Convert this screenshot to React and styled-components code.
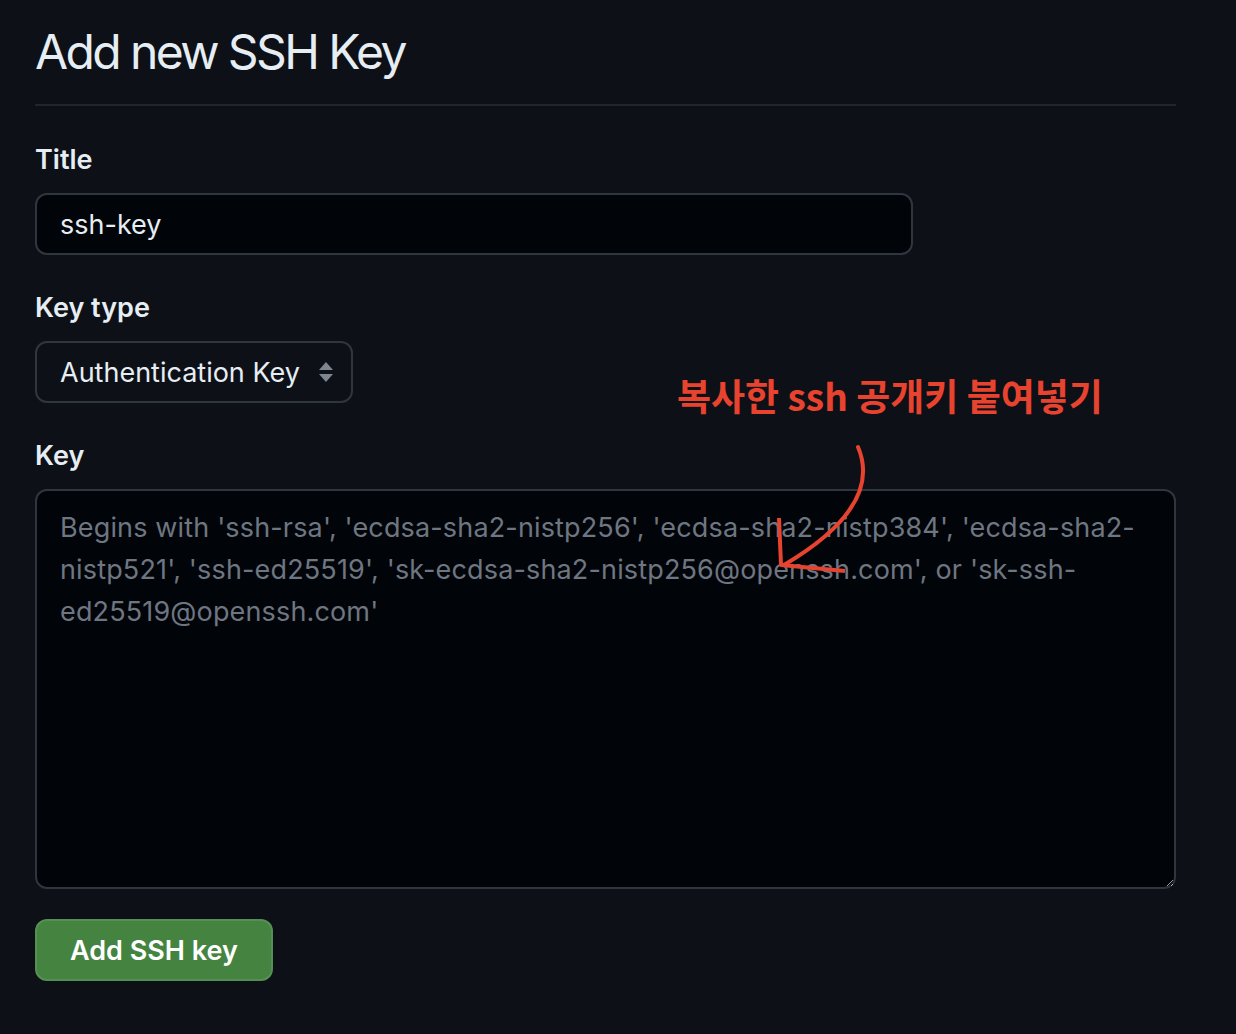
import styled, { createGlobalStyle } from 'styled-components'

const GlobalStyle = createGlobalStyle`
  html, body {
    margin: 0;
    background: #0d1117;
  }
  body {
    font-family: Inter, "Liberation Sans", "Noto Sans CJK KR", sans-serif;
    color: #e6edf3;
  }
`

const Page = styled.div`
  position: relative;
  width: 1141px;
  padding: 22px 0 40px 35px;
`

const Heading = styled.h2`
  margin: 0;
  padding-bottom: 22px;
  border-bottom: 2px solid #21262d;
  font-size: 48px;
  line-height: 60px;
  font-weight: 400;
  letter-spacing: -2.6px;
`

const Form = styled.form`
  display: flex;
  flex-direction: column;
  align-items: flex-start;
  padding-top: 34px;
`

const Group = styled.div`
  display: flex;
  flex-direction: column;
  align-items: flex-start;
  margin-bottom: ${(p) => p.$spacing || 33}px;
`

const Label = styled.label`
  font-size: 27px;
  line-height: 40px;
  font-weight: 600;
  margin-bottom: 13px;
`

const fieldBase = `
  box-sizing: border-box;
  border: 2px solid #30363d;
  border-radius: 12px;
  color: #e6edf3;
  font-family: Inter, "Liberation Sans", sans-serif;
  font-size: 27px;
  outline: none;
`

const TextInput = styled.input`
  ${fieldBase}
  width: 878px;
  height: 62px;
  padding: 0 23px;
  background: #010409;
`

const SelectBox = styled.div`
  ${fieldBase}
  display: flex;
  align-items: center;
  gap: 17px;
  height: 62px;
  padding: 0 16px 0 23px;
  background: #0d1117;
`

const SelectArrows = styled.svg`
  width: 18px;
  height: 24px;
  fill: #7d8590;
`

const TextArea = styled.textarea`
  ${fieldBase}
  display: block;
  width: 1141px;
  height: 400px;
  padding: 16px 23px;
  line-height: 42px;
  letter-spacing: 0.15px;
  background: #010409;
  resize: vertical;

  &::placeholder {
    color: #6e7681;
    opacity: 1;
  }
`

const SubmitButton = styled.button`
  box-sizing: border-box;
  height: 62px;
  padding: 0 33px;
  border: 2px solid rgba(240, 246, 252, 0.1);
  border-radius: 12px;
  background: #448440;
  color: #ffffff;
  font-family: Inter, "Liberation Sans", sans-serif;
  font-size: 27px;
  font-weight: 600;
`

// 주석(빨간 안내 문구 + 화살표)
const Note = styled.div`
  position: absolute;
  left: 677px;
  top: 370px;
  color: #e8432f;
  font-family: "Noto Sans CJK KR", "Liberation Sans", sans-serif;
  font-size: 37px;
  line-height: 50px;
  font-weight: 700;
  white-space: nowrap;
`

const Arrow = styled.svg`
  position: absolute;
  left: 760px;
  top: 440px;
  width: 120px;
  height: 145px;
  overflow: visible;
`

const placeholder =
  "Begins with 'ssh-rsa', 'ecdsa-sha2-nistp256', 'ecdsa-sha2-nistp384', 'ecdsa-sha2-nistp521', 'ssh-ed25519', 'sk-ecdsa-sha2-nistp256@openssh.com', or 'sk-ssh-ed25519@openssh.com'"

const App = () => {
  return (
    <>
      <GlobalStyle />
      <Page>
        <Heading>Add new SSH Key</Heading>

        <Form onSubmit={(e) => e.preventDefault()}>
          <Group>
            <Label>Title</Label>
            <TextInput defaultValue="ssh-key" />
          </Group>

          <Group>
            <Label>Key type</Label>
            <SelectBox>
              <span>Authentication Key</span>
              <SelectArrows viewBox="0 0 18 24">
                <path d="M9 2 L16 10 H2 Z" />
                <path d="M9 22 L16 14 H2 Z" />
              </SelectArrows>
            </SelectBox>
          </Group>

          <Group $spacing={30}>
            <Label>Key</Label>
            <TextArea placeholder={placeholder} />
          </Group>

          <SubmitButton type="submit">Add SSH key</SubmitButton>
        </Form>

        <Note>복사한 ssh 공개키 붙여넣기</Note>
        <Arrow viewBox="0 0 120 145">
          <path
            d="M98 7 C112 40 100 80 24 125"
            fill="none"
            stroke="#e8432f"
            strokeWidth="4"
            strokeLinecap="round"
          />
          <path
            d="M19 78 L21 125 L85 131"
            fill="none"
            stroke="#e8432f"
            strokeWidth="4"
            strokeLinejoin="round"
          />
        </Arrow>
      </Page>
    </>
  )
}

export default App
